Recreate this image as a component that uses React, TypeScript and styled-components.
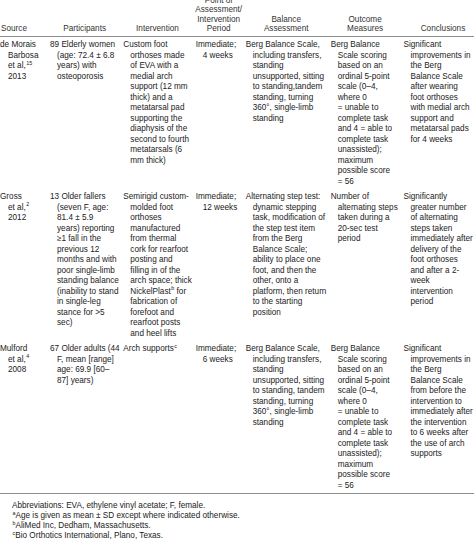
import React from "react";
import styled, { createGlobalStyle } from "styled-components";

const Global = createGlobalStyle`
  html, body { margin: 0; padding: 0; background: #ffffff; }
  body { font-family: "Liberation Sans", Arial, sans-serif; color: #222; }
`;

const Page = styled.div`
  width: 474px;
  height: 540px;
  overflow: hidden;
  background: #fff;
`;

const Table = styled.div`
  display: grid;
  grid-template-columns: 48px 73.3px 72.4px 50px 85px 72.8px 83px;
  width: max-content;
  border-bottom: 1px solid #8e8e8e;
  font-size: 8.2px;
`;

const HeaderCell = styled.div<{ $align?: "left" | "center" }>`
  box-sizing: border-box;
  height: 37px;
  border-bottom: 1px solid #8e8e8e;
  display: flex;
  flex-direction: column;
  justify-content: flex-end;
  align-items: ${(p) => (p.$align === "left" ? "flex-start" : "center")};
  padding: 0 0 3px ${(p) => (p.$align === "left" ? "1px" : "0")};
  line-height: 9.2px;
  white-space: nowrap;
  text-align: center;
  color: #333;
`;

const BodyCell = styled.div<{ $source?: boolean }>`
  padding: 3px 0 2px ${(p) => (p.$source ? 8 : 9)}px;
  text-indent: ${(p) => (p.$source ? -8 : -7)}px;
  line-height: 10.5px;
  white-space: nowrap;
`;

const Sup = styled.sup`
  font-size: 5.4px;
  line-height: 0;
  vertical-align: 3.5px;
  margin-left: 0.5px;
`;

const Notes = styled.div`
  padding: 7px 0 0 12px;
  font-size: 8.2px;
  line-height: 10px;
  white-space: nowrap;
`;

const NoteLine = styled.div``;

type Line = React.ReactNode;

const Lines: React.FC<{ lines: Line[] }> = ({ lines }) => (
  <>
    {lines.map((l, i) => (
      <React.Fragment key={i}>
        {i > 0 && <br />}
        {l}
      </React.Fragment>
    ))}
  </>
);

const headers: { lines: string[]; align?: "left" | "center" }[] = [
  { lines: ["Source"], align: "left" },
  { lines: ["Participants"] },
  { lines: ["Intervention"] },
  { lines: ["Point of", "Assessment/", "Intervention", "Period"] },
  { lines: ["Balance", "Assessment"] },
  { lines: ["Outcome", "Measures"] },
  { lines: ["Conclusions"] },
];

const bergBalance = (tandem: string): Line[] => [
  "Berg Balance Scale,",
  "including transfers,",
  "standing",
  "unsupported, sitting",
  tandem,
  "standing, turning",
  "360°, single-limb",
  "standing",
];

const bergOutcome: Line[] = [
  "Berg Balance",
  "Scale scoring",
  "based on an",
  "ordinal 5-point",
  "scale (0–4,",
  "where 0",
  "= unable to",
  "complete task",
  "and 4 = able to",
  "complete task",
  "unassisted);",
  "maximum",
  "possible score",
  "= 56",
];

const rows: Line[][][] = [
  [
    ["de Morais", "Barbosa", <>et al,<Sup>15</Sup></>, "2013"],
    ["89 Elderly women", "(age: 72.4 ± 6.8", "years) with", "osteoporosis"],
    [
      "Custom foot",
      "orthoses made",
      "of EVA with a",
      "medial arch",
      "support (12 mm",
      "thick) and a",
      "metatarsal pad",
      "supporting the",
      "diaphysis of the",
      "second to fourth",
      "metatarsals (6",
      "mm thick)",
    ],
    ["Immediate;", "4 weeks"],
    bergBalance("to standing,tandem"),
    bergOutcome,
    [
      "Significant",
      "improvements in",
      "the Berg",
      "Balance Scale",
      "after wearing",
      "foot orthoses",
      "with medial arch",
      "support and",
      "metatarsal pads",
      "for 4 weeks",
    ],
  ],
  [
    ["Gross", <>et al,<Sup>2</Sup></>, "2012"],
    [
      "13 Older fallers",
      "(seven F, age:",
      "81.4 ± 5.9",
      "years) reporting",
      "≥1 fall in the",
      "previous 12",
      "months and with",
      "poor single-limb",
      "standing balance",
      "(inability to stand",
      "in single-leg",
      "stance for >5",
      "sec)",
    ],
    [
      "Semirigid custom-",
      "molded foot",
      "orthoses",
      "manufactured",
      "from thermal",
      "cork for rearfoot",
      "posting and",
      "filling in of the",
      "arch space; thick",
      <>NickelPlast<Sup>b</Sup> for</>,
      "fabrication of",
      "forefoot and",
      "rearfoot posts",
      "and heel lifts",
    ],
    ["Immediate;", "12 weeks"],
    [
      "Alternating step test:",
      "dynamic stepping",
      "task, modification of",
      "the step test item",
      "from the Berg",
      "Balance Scale;",
      "ability to place one",
      "foot, and then the",
      "other, onto a",
      "platform, then return",
      "to the starting",
      "position",
    ],
    ["Number of", "alternating steps", "taken during a", "20-sec test", "period"],
    [
      "Significantly",
      "greater number",
      "of alternating",
      "steps taken",
      "immediately after",
      "delivery of the",
      "foot orthoses",
      "and after a 2-",
      "week",
      "intervention",
      "period",
    ],
  ],
  [
    ["Mulford", <>et al,<Sup>4</Sup></>, "2008"],
    ["67 Older adults (44", "F, mean [range]", "age: 69.9 [60–", "87] years)"],
    [<>Arch supports<Sup>c</Sup></>],
    ["Immediate;", "6 weeks"],
    bergBalance("to standing, tandem"),
    bergOutcome,
    [
      "Significant",
      "improvements in",
      "the Berg",
      "Balance Scale",
      "from before the",
      "intervention to",
      "immediately after",
      "the intervention",
      "to 6 weeks after",
      "the use of arch",
      "supports",
    ],
  ],
];

export default function App() {
  return (
    <Page>
      <Global />
      <Table>
        {headers.map((h, i) => (
          <HeaderCell key={`h${i}`} $align={h.align}>
            <div>
              <Lines lines={h.lines} />
            </div>
          </HeaderCell>
        ))}
        {rows.map((row, r) =>
          row.map((cell, c) => (
            <BodyCell key={`r${r}c${c}`} $source={c === 0}>
              <Lines lines={cell} />
            </BodyCell>
          ))
        )}
      </Table>
      <Notes>
        <NoteLine>Abbreviations: EVA, ethylene vinyl acetate; F, female.</NoteLine>
        <NoteLine>
          <Sup>a</Sup>Age is given as mean ± SD except where indicated otherwise.
        </NoteLine>
        <NoteLine>
          <Sup>b</Sup>AliMed Inc, Dedham, Massachusetts.
        </NoteLine>
        <NoteLine>
          <Sup>c</Sup>Bio Orthotics International, Plano, Texas.
        </NoteLine>
      </Notes>
    </Page>
  );
}
